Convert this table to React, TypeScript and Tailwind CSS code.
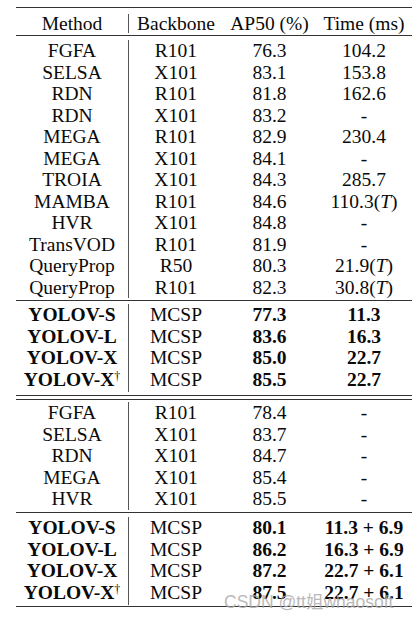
import React from "react";

type Row = { m: React.ReactNode; b: string; ap: string; t: React.ReactNode; h?: string };

const T = (v: string) => (
  <span>
    {v}(<i>T</i>)
  </span>
);
const dag = (
  <span>
    YOLOV-X<sup className="text-[12px] font-normal">†</sup>
  </span>
);

const block1: Row[] = [
  { m: "FGFA", b: "R101", ap: "76.3", t: "104.2" },
  { m: "SELSA", b: "X101", ap: "83.1", t: "153.8" },
  { m: "RDN", b: "R101", ap: "81.8", t: "162.6" },
  { m: "RDN", b: "X101", ap: "83.2", t: "-" },
  { m: "MEGA", b: "R101", ap: "82.9", t: "230.4" },
  { m: "MEGA", b: "X101", ap: "84.1", t: "-" },
  { m: "TROIA", b: "X101", ap: "84.3", t: "285.7" },
  { m: "MAMBA", b: "R101", ap: "84.6", t: T("110.3") },
  { m: "HVR", b: "X101", ap: "84.8", t: "-" },
  { m: "TransVOD", b: "R101", ap: "81.9", t: "-" },
  { m: "QueryProp", b: "R50", ap: "80.3", t: T("21.9") },
  { m: "QueryProp", b: "R101", ap: "82.3", t: T("30.8") },
];

const block2: Row[] = [
  { m: "YOLOV-S", b: "MCSP", ap: "77.3", t: "11.3" },
  { m: "YOLOV-L", b: "MCSP", ap: "83.6", t: "16.3" },
  { m: "YOLOV-X", b: "MCSP", ap: "85.0", t: "22.7" },
  { m: dag, b: "MCSP", ap: "85.5", t: "22.7", h: "h-[23px]" },
];

const block3: Row[] = [
  { m: "FGFA", b: "R101", ap: "78.4", t: "-" },
  { m: "SELSA", b: "X101", ap: "83.7", t: "-" },
  { m: "RDN", b: "X101", ap: "84.7", t: "-" },
  { m: "MEGA", b: "X101", ap: "85.4", t: "-" },
  { m: "HVR", b: "X101", ap: "85.5", t: "-" },
];

const block4: Row[] = [
  { m: "YOLOV-S", b: "MCSP", ap: "80.1", t: "11.3 + 6.9" },
  { m: "YOLOV-L", b: "MCSP", ap: "86.2", t: "16.3 + 6.9" },
  { m: "YOLOV-X", b: "MCSP", ap: "87.2", t: "22.7 + 6.1" },
  { m: dag, b: "MCSP", ap: "87.5", t: "22.7 + 6.1", h: "h-[23px]" },
];

function Rows({ rows, bold }: { rows: Row[]; bold?: boolean }) {
  return (
    <>
      {rows.map((r, i) => (
        <div key={i} className={`flex items-center ${r.h ?? "h-[21.5px]"}`}>
          <div
            className={`w-[113px] h-full flex items-center justify-center border-r border-[#555] ${bold ? "font-bold" : ""}`}
          >
            {r.m}
          </div>
          <div className="w-[94px] text-center">{r.b}</div>
          <div className={`w-[93px] text-center ${bold ? "font-bold" : ""}`}>{r.ap}</div>
          <div className={`w-[96px] text-center ${bold ? "font-bold" : ""}`}>{r.t}</div>
        </div>
      ))}
    </>
  );
}

const Rule = () => <div className="h-px bg-[#333]" />;

export default function App() {
  return (
    <div
      className="relative w-[416px] h-[622px] bg-white text-[#0a0a0a] overflow-hidden"
      style={{ fontFamily: '"Liberation Serif", "Times New Roman", serif' }}
    >
      <div className="pt-[7px] pl-[16px] w-[412px] text-[19.5px] leading-[21.5px]">
        <Rule />
        <div className="pt-[6px] pb-[2px]">
          <div className="flex items-center h-[19px]">
            <div className="w-[113px] h-full flex items-center justify-center border-r border-[#555]">Method</div>
            <div className="w-[94px] text-center">Backbone</div>
            <div className="w-[93px] text-center">AP50 (%)</div>
            <div className="w-[96px] text-center">Time (ms)</div>
          </div>
        </div>
        <Rule />
        <div className="pt-[4px] pb-[2px]">
          <Rows rows={block1} />
        </div>
        <Rule />
        <div className="pt-[3px] pb-[3.5px]">
          <Rows rows={block2} bold />
        </div>
        <Rule />
        <div className="h-[3px]" />
        <Rule />
        <div className="pt-[2px] pb-[2.5px]">
          <Rows rows={block3} />
        </div>
        <Rule />
        <div className="pt-[4px] pb-[1.5px]">
          <Rows rows={block4} bold />
        </div>
        <Rule />
      </div>
      <div
        className="absolute left-[224px] top-[591px] text-[17.5px] leading-[22px] text-[#a9a9a9] whitespace-nowrap opacity-80"
        style={{ fontFamily: '"Liberation Sans", "Noto Sans CJK SC", sans-serif' }}
      >
        CSDN @tt姐whaosoft
      </div>
    </div>
  );
}
